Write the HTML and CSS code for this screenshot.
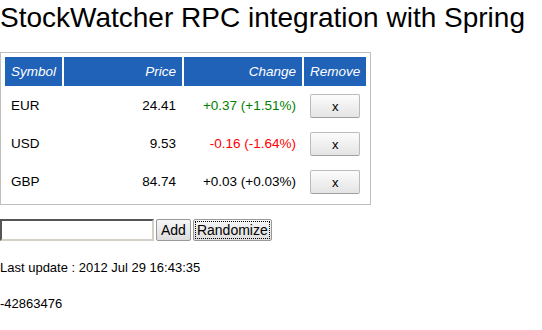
FILE: index.html
```html
<!DOCTYPE html>
<html>
<head>
<meta charset="utf-8">
<link rel="stylesheet" href="styles.css">
</head>
<body>
<h1 class="title">StockWatcher RPC integration with Spring</h1>
<table class="watch-list">
  <tr class="watch-header">
    <td class="col-symbol">Symbol</td>
    <td class="col-num">Price</td>
    <td class="col-num">Change</td>
    <td class="col-remove">Remove</td>
  </tr>
  <tr>
    <td>EUR</td>
    <td class="col-num">24.41</td>
    <td class="col-num pos">+0.37 (+1.51%)</td>
    <td class="col-remove"><button class="remove-btn">x</button></td>
  </tr>
  <tr>
    <td>USD</td>
    <td class="col-num">9.53</td>
    <td class="col-num neg">-0.16 (-1.64%)</td>
    <td class="col-remove"><button class="remove-btn">x</button></td>
  </tr>
  <tr>
    <td>GBP</td>
    <td class="col-num">84.74</td>
    <td class="col-num">+0.03 (+0.03%)</td>
    <td class="col-remove"><button class="remove-btn">x</button></td>
  </tr>
</table>
<div class="add-panel">
  <input class="symbol-input" type="text">
  <button class="native-btn">Add</button>
  <button class="native-btn focused">Randomize</button>
</div>
<p class="last-update">Last update : 2012 Jul 29 16:43:35</p>
<p class="number">-42863476</p>
</body>
</html>
```
FILE: styles.css
```css
body {
  margin: 0;
  font-family: "Liberation Sans", Arial, sans-serif;
  font-size: 13px;
  color: #000;
}
.title {
  margin: 2px 0 0 0;
  font-size: 28px;
  font-weight: normal;
  line-height: 32px;
}
.watch-list {
  margin-top: 18px;
  border: 1px solid #c0c0c0;
  padding: 2px;
  border-spacing: 2px;
  font-size: 13.5px;
}
.watch-list td {
  padding: 6px;
  line-height: 16px;
  white-space: nowrap;
}
.watch-header td {
  background: #2062b8;
  color: #fff;
  font-style: italic;
  line-height: 17px;
}
.col-symbol { width: 44px; }
.col-num {
  text-align: right;
  width: 106px;
}
.col-remove {
  text-align: center;
  width: 50px;
}
.pos { color: #008000; }
.neg { color: #ff0000; }
.remove-btn {
  width: 50px;
  height: 24px;
  margin: 0;
  padding: 0;
  font-family: "Liberation Sans", Arial, sans-serif;
  font-size: 13px;
  color: #000;
  border: 1px solid #bbb;
  border-bottom-color: #a0a0a0;
  border-radius: 2px;
  background: linear-gradient(#fcfcfc, #e4e4e4);
  vertical-align: middle;
}
.add-panel {
  display: flex;
  align-items: stretch;
  margin-top: 14px;
  height: 22px;
}
.symbol-input {
  margin: 0;
  padding: 0;
  border: 2px solid;
  border-color: #555 #d4d0c8 #d4d0c8 #555;
  box-sizing: border-box;
  width: 154px;
  height: 22px;
}
.native-btn {
  margin: 0 0 0 2px;
  padding: 0 4px;
  height: 22px;
  font-family: "Liberation Sans", Arial, sans-serif;
  font-size: 14px;
  color: #000;
  border: 1px solid #999;
  border-radius: 2px;
  background: linear-gradient(#f6f6f6, #dddddd);
}
.native-btn.focused {
  margin-left: 2px;
  padding: 0 3px;
  outline: 1px dotted #000;
  outline-offset: -3px;
}
.last-update {
  margin: 19px 0 0 0;
  line-height: 16px;
}
.number {
  margin: 20px 0 0 0;
  line-height: 16px;
}
```
